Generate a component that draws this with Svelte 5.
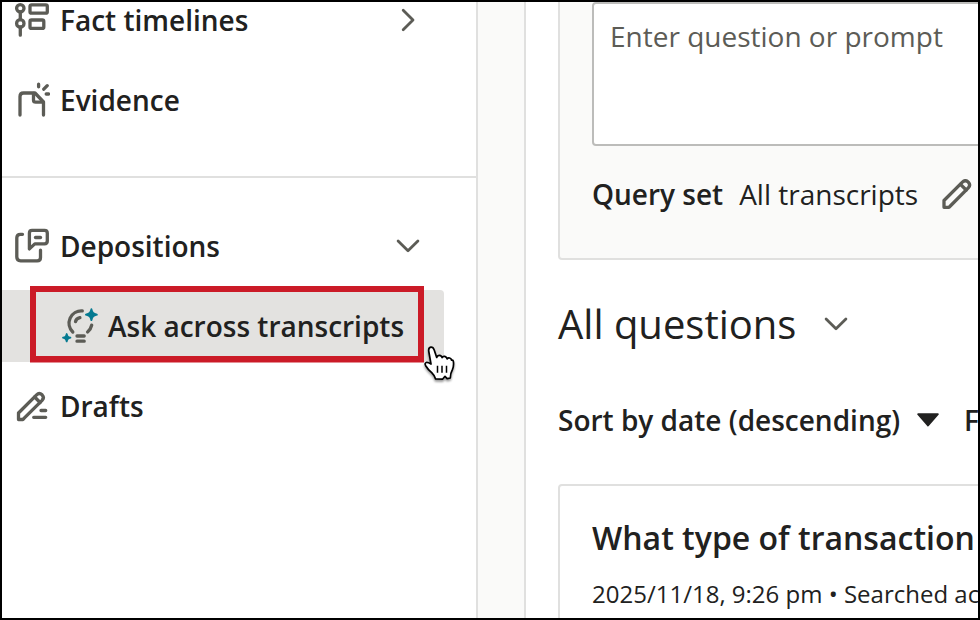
<script lang="ts">
    const question = {
        title: 'What type of transaction',
        meta: '2025/11/18, 9:26 pm • Searched across'
    };
</script>

<div class="frame">
    <nav class="sidebar">
        <a class="item first" href="#facts">
            <svg class="icon" width="36" height="36" viewBox="0 0 36 36">
                <circle cx="6.3" cy="6.3" r="3.7" />
                <circle cx="6.3" cy="21.4" r="3.7" />
                <path d="M6.3 10v7.7M6.3 25v8.2" />
                <rect x="16" y="2.8" width="17.3" height="8.4" rx="1.5" />
                <rect x="16" y="18" width="13.8" height="8.4" rx="1.5" />
            </svg>
            <span>Fact timelines</span>
            <svg class="chevron" width="24" height="24" viewBox="0 0 24 24"><path d="M7.2 2.2 17 12l-9.8 9.8" /></svg>
        </a>
        <a class="item" href="#evidence">
            <svg class="icon" width="36" height="36" viewBox="0 0 36 36">
                <path d="M6 33V14.500Q6 11 9.500 11H21l8.500 9v13" />
                <path d="M19.500 11.500V18q0 2.200 2.200 2.200h7.500" />
                <path d="M24.600 2.200v2.600M29.800 7.200l3.400-3.500M32.200 12h2.400" />
            </svg>
            <span>Evidence</span>
        </a>
        <hr />
        <a class="item" href="#depositions">
            <svg class="icon" width="36" height="36" viewBox="0 0 36 36">
                <path d="M8.5 6.3H6.3q-3.5 0-3.5 3.5V29q0 3.8 3.8 3.8h16.6q3.3 0 3.3-3.3v-7.3" />
                <path d="M18 2.3h12.5q2.8 0 2.8 2.8v8q0 2.8-2.8 2.8h-9.7l-5.4 5V5q0-2.7 2.6-2.7z" />
                <path d="M21.5 9.5h5" />
            </svg>
            <span>Depositions</span>
            <svg class="chevron" width="24" height="24" viewBox="0 0 24 24"><path d="m2.1 7 9.9 9.8L21.9 7" /></svg>
        </a>
        <a class="item selected" href="#ask">
            <svg class="icon" width="38" height="38" viewBox="0 0 38 38">
                <path d="M20.3 3.9A12.3 12.3 0 0 0 10.8 25" />
                <path d="M29.7 18.2q-.9 4.2-4.1 6.8" />
                <path d="M13.5 14.7q.7-3.3 4.4-4" />
                <path d="M15 29h7.2M15 34.200h7.200" />
                <path class="spark" d="M29.4 2.2c.9 3.7 1.8 4.6 5.5 5.5-3.7.9-4.6 1.8-5.5 5.500-.9-3.700-1.800-4.600-5.500-5.500 3.700-.9 4.600-1.800 5.500-5.500z" />
                <path class="spark" d="M4.700 27c.7 2.600 1.100 3 3.700 3.700-2.600.7-3 1.100-3.700 3.700-.7-2.600-1.100-3-3.700-3.700 2.600-.7 3-1.100 3.700-3.700z" />
            </svg>
            <span>Ask across transcripts</span>
        </a>
        <a class="item" href="#drafts">
            <svg class="icon" width="36" height="36" viewBox="0 0 36 36">
                <path d="M4.500 31.500V25L22.600 6.800q2.600-2.600 5.500 0 2.600 2.700 0 5.500L10.700 29.700 8.900 31.500z" />
                <path d="m20.600 9 5.500 5.500M27 22.500h4.700M19.700 29.300h12" />
            </svg>
            <span>Drafts</span>
        </a>
    </nav>
    <div class="gutter"></div>
    <main>
        <section class="prompt-card">
            <div class="prompt">Enter question or prompt</div>
            <div class="query-set">
                <strong>Query set</strong>
                <span>All transcripts</span>
                <svg class="icon" width="30" height="30" viewBox="0 0 30 30">
                    <path d="M2 28.300v-6.800L20.400 3.100q3-2.800 5.900 0 2.700 3 0 5.800L8.300 27 7 28.300z" />
                    <path d="m18.500 5.300 5.700 5.700" />
                </svg>
            </div>
        </section>
        <h1>
            <span>All questions</span>
            <svg class="chevron" width="24" height="24" viewBox="0 0 24 24"><path d="m2.1 7 9.9 9.8L21.9 7" /></svg>
        </h1>
        <div class="sort">
            <span>Sort by date (descending)</span>
            <svg class="caret" width="24" height="14" viewBox="0 0 24 14"><path d="M2.2 1.2h19.6L12 12.4z" /></svg>
            <span>Filter</span>
        </div>
        <section class="question">
            <h2>{question.title}</h2>
            <p>{question.meta}</p>
        </section>
    </main>

    <div class="highlight"></div>
    <svg class="pointer" width="38" height="44" viewBox="0 0 38 44">
        <path d="M12 22 9.800 9.500Q9.200 5.800 11.800 5.200q2.300-.3 3.400 2.800l2.500 7.500q.6-2.400 2.700-2.200 2.300.2 2.700 2.400.7-1.800 2.700-1.300 2 .6 2.300 2.500 1-1.400 2.500-.9 1.700.6 1.900 2.200 1.500-.6 1.900 1.500.6 4.300-1 8-2 3.500-2.100 8.300l-3.200.6-2.100-2.300-2.500 2.900-6.900-.2q-.6-3-3.900-6.300-4-3.600-6-7-1.400-2.600.6-3.200 1.500-.4 4.700 1.500z" />
        <path class="folds" d="M18.500 23.800v7M23 23.800v7M27.500 23.800v7" />
    </svg>
</div>

<style>
    .frame {
        position: relative;
        box-sizing: border-box;
        width: 980px;
        height: 620px;
        border: 2px solid #000;
        display: flex;
        overflow: hidden;
        background: #fff;
        color: #212120;
        font-family: 'Open Sans', 'Noto Sans', sans-serif;
        font-size: 28px;
        line-height: 38px;
        white-space: nowrap;
    }

    .sidebar {
        width: 474px;
        flex: none;
        border-right: 2px solid #e0e0df;
    }

    .item {
        box-sizing: border-box;
        height: 80px;
        padding: 0 56px 0 12px;
        display: flex;
        align-items: center;
        gap: 10px;
        color: inherit;
        font-weight: 600;
        text-decoration: none;
    }

    .item span {
        flex: 1;
    }

    .first {
        margin-top: -22px;
    }

    hr {
        margin: 36px 0 28px;
        border: 0;
        border-top: 2px solid #e0e0df;
    }

    .selected {
        width: 442px;
        height: 72px;
        margin: 4px 0;
        padding: 0 0 0 60px;
        gap: 8px;
        border-radius: 0 4px 4px 0;
        background: #e3e2e0;
    }

    .icon,
    .chevron {
        flex: none;
        fill: none;
        stroke: #5c5c56;
        stroke-width: 3.3;
        stroke-linecap: round;
        stroke-linejoin: round;
    }

    .chevron {
        stroke-width: 2.8;
    }

    .spark {
        fill: #057a91;
        stroke: #057a91;
        stroke-width: 1.8;
    }

    .gutter {
        width: 46px;
        flex: none;
        border-right: 2px solid #e0e0df;
        background: #fafaf9;
    }

    main {
        width: 500px;
        flex: none;
        padding-left: 32px;
    }

    .prompt-card {
        box-sizing: border-box;
        height: 258px;
        padding-left: 32px;
        border: 2px solid #e0e0df;
        border-top: 0;
        border-radius: 0 0 4px 4px;
        background: #fafaf9;
    }

    .prompt {
        box-sizing: border-box;
        height: 144px;
        padding: 13px 16px;
        border: 2px solid #bcbcba;
        border-radius: 4px;
        background: #fff;
        color: #5c5c56;
    }

    .query-set {
        display: flex;
        align-items: center;
        margin-top: 29px;
    }

    .query-set span {
        margin: 0 24px 0 16px;
    }

    strong,
    h2 {
        font-weight: 600;
    }

    h1 {
        display: flex;
        align-items: center;
        gap: 28px;
        margin: 36px 0 0;
        font-size: 40px;
        line-height: 56px;
        font-weight: 400;
    }

    .sort {
        display: flex;
        align-items: center;
        margin-top: 49px;
        font-weight: 600;
    }

    .caret {
        margin: 0 24px 0 16px;
        fill: #212120;
        stroke: #212120;
        stroke-width: 2;
        stroke-linejoin: round;
    }

    .question {
        box-sizing: border-box;
        height: 160px;
        margin-top: 45px;
        padding: 32px;
        border: 2px solid #e0e0df;
        border-radius: 4px;
    }

    h2 {
        margin: 0;
        font-size: 32px;
        line-height: 40px;
    }

    p {
        margin: 20px 0 0;
        font-size: 24px;
        line-height: 32px;
    }

    .highlight {
        position: absolute;
        left: 28px;
        top: 284px;
        box-sizing: border-box;
        width: 394px;
        height: 76px;
        border: 6px solid #cb1b27;
        box-shadow: 0 1px rgba(203, 27, 39, 0.5);
    }

    .pointer {
        position: absolute;
        left: 417px;
        top: 340px;
        fill: #fff;
        stroke: #000;
        stroke-width: 1.7;
        stroke-linejoin: round;
        filter: drop-shadow(0 2px 1px rgba(0, 0, 0, 0.4));
    }

    .folds {
        stroke-width: 1.5;
    }
</style>
